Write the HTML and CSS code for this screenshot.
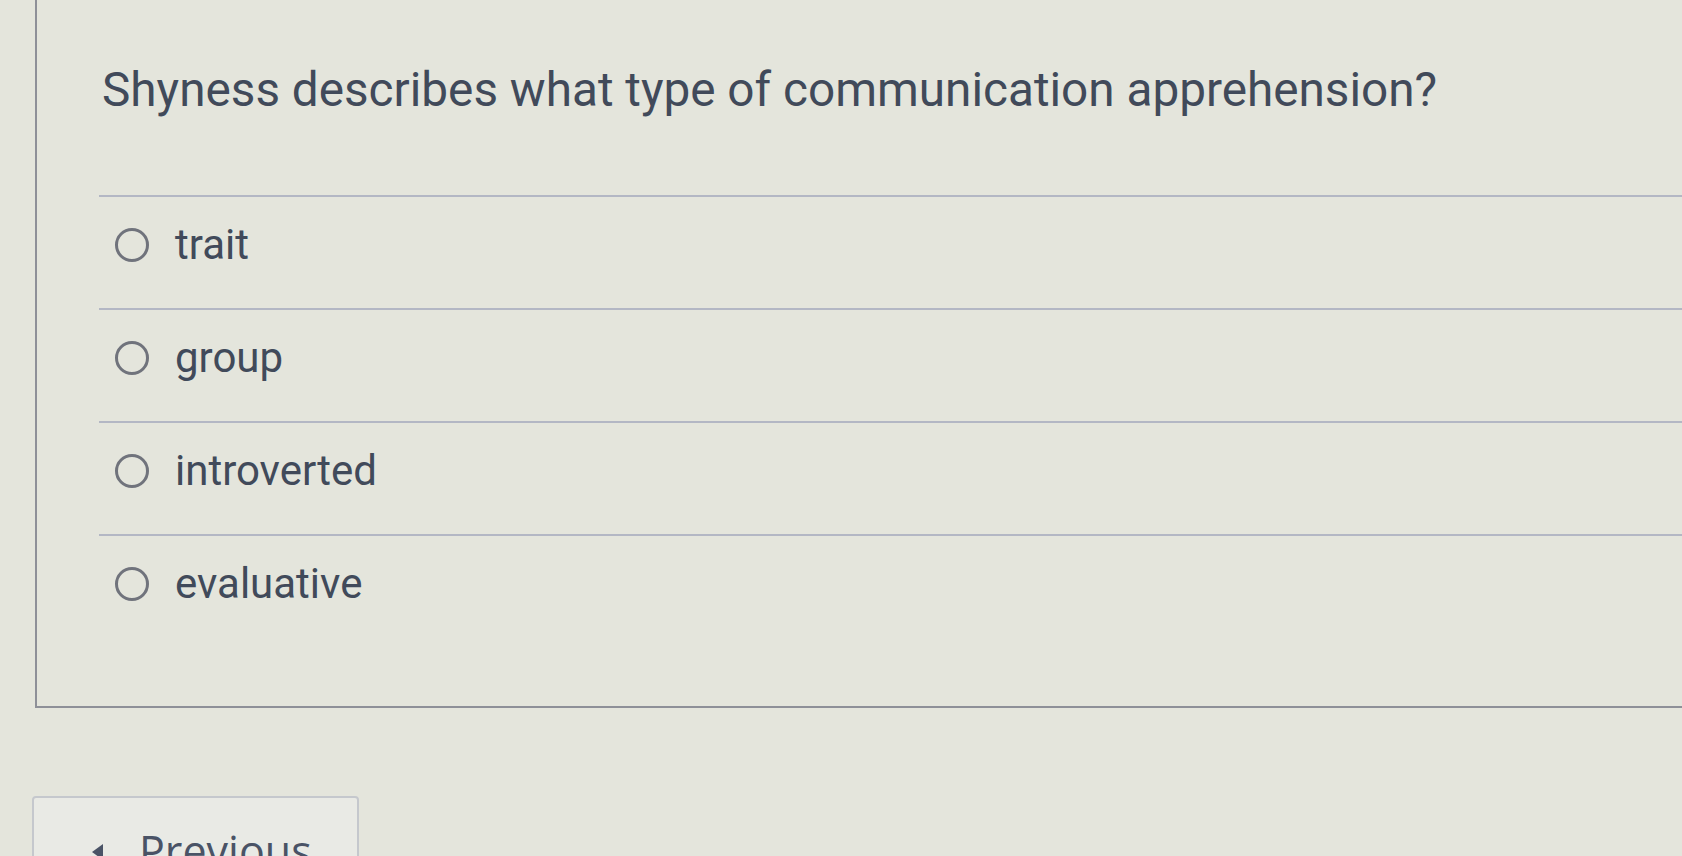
FILE: index.html
```html
<!DOCTYPE html>
<html lang="en">
<head>
<meta charset="utf-8">
<title>Quiz question</title>
<link rel="stylesheet" href="styles.css">
</head>
<body>
<div class="page">
  <div class="card">
    <div class="question">Shyness describes what type of communication apprehension?</div>
    <ul class="answers">
      <li class="answer"><span class="radio"></span><span class="label">trait</span></li>
      <li class="answer"><span class="radio"></span><span class="label">group</span></li>
      <li class="answer"><span class="radio"></span><span class="label">introverted</span></li>
      <li class="answer"><span class="radio"></span><span class="label">evaluative</span></li>
    </ul>
  </div>
  <div class="nav">
    <button class="prev"><span class="arrow"></span><span>Previous</span></button>
  </div>
</div>
</body>
</html>
```
FILE: styles.css
```css
html, body {
  margin: 0;
  padding: 0;
  height: 100%;
  overflow: hidden;
}
body {
  background: #e4e5dc;
  font-family: Roboto, "Liberation Sans", Arial, sans-serif;
  color: #414a5a;
}
.page {
  width: 1682px;
  height: 856px;
  overflow: hidden;
}
.card {
  margin-left: 35px;
  width: 1720px;
  border-left: 2px solid #8e9098;
  border-bottom: 2px solid #8e9098;
  padding-top: 62px;
  padding-bottom: 59px;
}
.question {
  margin-left: 65px;
  font-size: 47.7px;
  line-height: 56px;
  margin-bottom: 77px;
}
.answers {
  list-style: none;
  margin: 0 0 0 62px;
  padding: 0;
}
.answer {
  display: flex;
  align-items: center;
  height: 95px;
  padding: 0 0 16px 16px;
  box-sizing: content-box;
  border-top: 2px solid #b3b7c4;
}
.radio {
  width: 28px;
  height: 28px;
  border: 3px solid #70737c;
  border-radius: 50%;
  flex: none;
  background: transparent;
}
.label {
  margin-left: 26px;
  font-size: 42px;
  line-height: 50px;
}
.nav {
  margin-top: 88px;
  margin-left: 32px;
}
.prev {
  display: flex;
  align-items: flex-start;
  width: 327px;
  height: 90px;
  padding: 27px 0 0 58px;
  box-sizing: border-box;
  border: 2px solid #c5c8cd;
  border-radius: 4px;
  background: #e9eae5;
  font-family: "Open Sans", "Noto Sans", sans-serif;
  font-size: 43px;
  line-height: 52px;
  color: #4a5366;
  cursor: pointer;
}
.arrow {
  width: 0;
  height: 0;
  margin-top: 19px;
  margin-right: 36px;
  border-top: 8px solid transparent;
  border-bottom: 8px solid transparent;
  border-right: 11px solid #4a5366;
}
```
